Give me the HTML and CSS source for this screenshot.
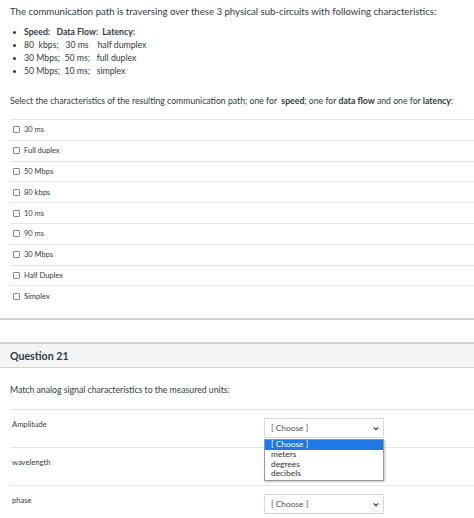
FILE: index.html
```html
<!DOCTYPE html>
<html>
<head>
<meta charset="utf-8">
<link rel="stylesheet" href="styles.css">
</head>
<body>
<div class="question q1">
  <div class="text">
    <p class="intro">The communication path is traversing over these 3 physical sub-circuits with following characteristics:</p>
    <ul class="chars">
      <li><b>Speed:&nbsp;&nbsp; Data Flow:&nbsp; Latency:</b></li>
      <li>80&nbsp; kbps;&nbsp;&nbsp; 30 ms&nbsp;&nbsp;&nbsp; half dumplex</li>
      <li>30 Mbps;&nbsp; 50 ms;&nbsp;&nbsp; full duplex</li>
      <li>50 Mbps;&nbsp; 10 ms;&nbsp;&nbsp; simplex</li>
    </ul>
    <p class="select-text">Select the characteristics of the resulting communication path; one for&nbsp; <b>speed</b>; one for <b>data flow</b> and one for <b>latency</b>:</p>
  </div>
  <div class="answers">
    <div class="answer"><span class="box"></span>30 ms</div>
    <div class="answer"><span class="box"></span>Full duplex</div>
    <div class="answer"><span class="box"></span>50 Mbps</div>
    <div class="answer"><span class="box"></span>80 kbps</div>
    <div class="answer"><span class="box"></span>10 ms</div>
    <div class="answer"><span class="box"></span>90 ms</div>
    <div class="answer"><span class="box"></span>30 Mbps</div>
    <div class="answer"><span class="box"></span>Half Duplex</div>
    <div class="answer"><span class="box"></span>Simplex</div>
  </div>
</div>

<div class="question q2">
  <div class="header">Question 21</div>
  <p class="match-text">Match analog signal characteristics to the measured units:</p>
  <div class="matches">
    <div class="match">
      <span class="label">Amplitude</span>
      <div class="select-wrap">
        <div class="select"><span>[ Choose ]</span><svg class="chev" viewBox="0 0 8 6" width="6" height="5"><path d="M1 1.5 L4 4.5 L7 1.5" fill="none" stroke="#333" stroke-width="1.6"/></svg></div>
        <div class="dropdown">
          <div class="opt sel">[ Choose ]</div>
          <div class="opt">meters</div>
          <div class="opt">degrees</div>
          <div class="opt">decibels</div>
        </div>
      </div>
    </div>
    <div class="match">
      <span class="label">wavelength</span>
    </div>
    <div class="match">
      <span class="label">phase</span>
      <div class="select-wrap">
        <div class="select"><span>[ Choose ]</span><svg class="chev" viewBox="0 0 8 6" width="6" height="5"><path d="M1 1.5 L4 4.5 L7 1.5" fill="none" stroke="#333" stroke-width="1.6"/></svg></div>
      </div>
    </div>
  </div>
</div>
</body>
</html>
```

FILE: styles.css
```css
* { box-sizing: border-box; }
html, body { margin: 0; padding: 0; background: #fff; }
body {
  font-family: Lato, "Open Sans", sans-serif;
  color: #2d3b45;
  width: 474px;
  overflow: hidden;
}
p { margin: 0; }

.q1 {
  border-bottom: 2px solid #d2d2d2;
}
.q1 .text {
  padding: 5px 0 0 10px;
  font-size: 8.7px;
  line-height: 13px;
  white-space: nowrap;
}
.intro { font-size: 9.6px; }
.chars {
  margin: 7px 0 0 0;
  padding: 0 0 0 14px;
  list-style: none;
}
.chars li {
  position: relative;
  line-height: 13px;
}
.chars li::before {
  content: "";
  position: absolute;
  left: -11px;
  top: 5.5px;
  width: 3px;
  height: 3px;
  border-radius: 50%;
  background: #2d3b45;
}
.select-text {
  margin-top: 17px;
  padding-bottom: 12px;
}
.answers {
  margin-left: 10px;
  border-top: 1px solid #e6e6e6;
  padding-bottom: 11px;
}
.answer {
  height: 20.8px;
  display: flex;
  align-items: center;
  font-size: 7.5px;
  color: #2d3b45;
  padding-left: 3px;
  border-bottom: 1px solid #e6e6e6;
}
.answer:last-child { border-bottom: none; }
.box {
  width: 7px;
  height: 7px;
  border: 1px solid #8a8a8a;
  border-radius: 1px;
  margin-right: 4px;
  flex: none;
}

.q2 { margin-top: 22px; }
.header {
  border-top: 2px solid #d2d2d2;
  border-bottom: 1px solid #d2d2d2;
  background: #f5f5f5;
  height: 26px;
  padding-left: 10px;
  display: flex;
  align-items: center;
  font-weight: bold;
  font-size: 10.6px;
  color: #2d3b45;
}
.match-text {
  padding: 16px 0 0 10px;
  font-size: 8.7px;
  line-height: 12px;
}
.matches {
  margin: 13px 0 0 10px;
}
.match {
  height: 38px;
  border-top: 1px solid #e6e6e6;
  display: flex;
  align-items: flex-start;
  position: relative;
}
.label {
  font-size: 7.6px;
  margin: 9px 0 0 2px;
  width: 252px;
  flex: none;
}
.select-wrap {
  position: relative;
  margin-top: 8px;
}
.select {
  width: 120px;
  height: 20px;
  border: 1px solid #d6d6d6;
  border-radius: 2px;
  background: #fff;
  display: flex;
  align-items: center;
  justify-content: space-between;
  padding: 0 4px 0 6px;
  font-size: 8.4px;
  color: #555;
}
.chev { display: block; }
.dropdown {
  position: absolute;
  top: 21px;
  left: 0;
  width: 120px;
  background: #fff;
  border: 1px solid #9a9a9a;
  box-shadow: 1px 1px 2px rgba(0,0,0,0.25);
  z-index: 2;
  font-size: 8.4px;
  color: #333;
  padding-bottom: 1px;
}
.opt {
  height: 9.7px;
  line-height: 9.7px;
  padding-left: 6px;
}
.opt.sel {
  background: #1e78e6;
  color: #fff;
}
```
